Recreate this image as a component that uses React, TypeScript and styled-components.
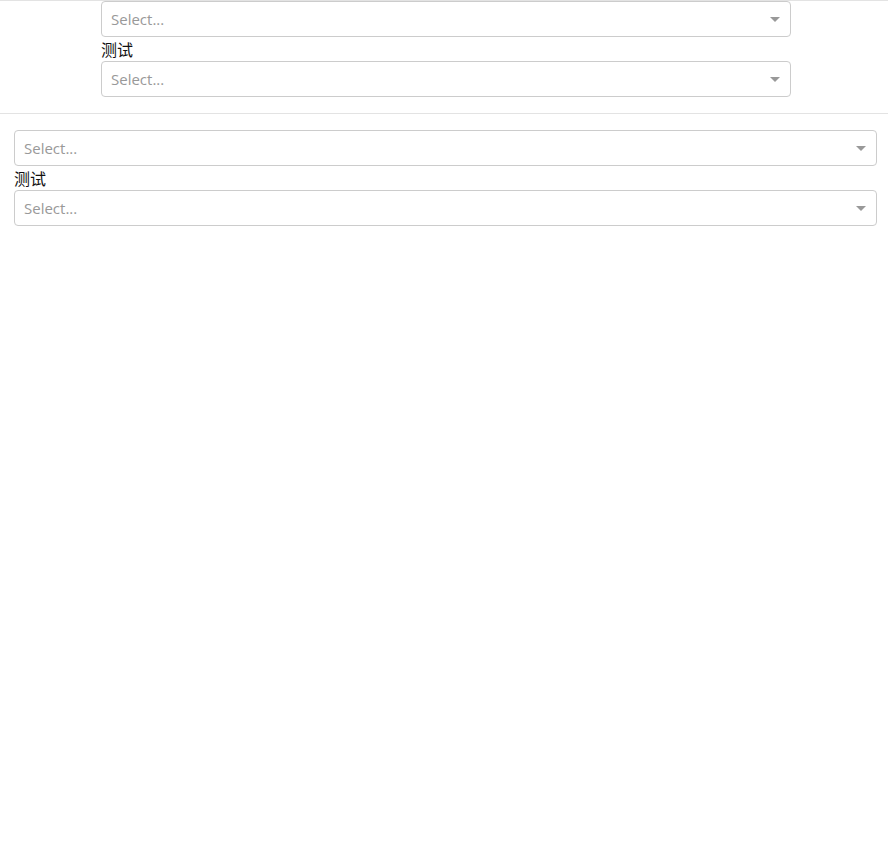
import React from 'react';
import styled, {createGlobalStyle} from "styled-components";

const GlobalStyle = createGlobalStyle`
  html, body {
    margin: 0;
    padding: 0;
    background: #fff;
  }
  body {
    font-family: "Open Sans", "Noto Sans CJK SC", sans-serif;
    font-size: 14px;
    color: #222;
  }
`

const Section = styled.div<{ $left: number; $right: number }>`
  border-top: 1px solid #e3e3e3;
  padding: 0 ${p => p.$right}px 16px ${p => p.$left}px;
  display: flex;
  flex-direction: column;

  &.second {
    padding-top: 16px;
  }
`

const Label = styled.label`
  display: block;
  height: 24px;
  line-height: 24px;
  font-family: "Noto Sans CJK SC", sans-serif;
  font-size: 16px;
  color: #111;
`

const Control = styled.div`
  box-sizing: border-box;
  height: 36px;
  border: 1px solid #cccccc;
  border-radius: 4px;
  background: #fff;
  display: flex;
  align-items: center;
  padding: 0 10px 0 9px;
  cursor: default;
`

const Placeholder = styled.span`
  flex: 1;
  color: #999999;
  font-size: 15px;
  white-space: nowrap;
`

const Caret = styled.span`
  width: 0;
  height: 0;
  border-left: 5px solid transparent;
  border-right: 5px solid transparent;
  border-top: 5px solid #999999;
  margin-top: 1px;
`

const Select = () => (
    <Control>
        <Placeholder>Select...</Placeholder>
        <Caret/>
    </Control>
)

const App = () => {
    return (
        <>
            <GlobalStyle/>
            <Section $left={101} $right={97}>
                <Select/>
                <Label>测试</Label>
                <Select/>
            </Section>
            <Section className={'second'} $left={14} $right={11}>
                <Select/>
                <Label>测试</Label>
                <Select/>
            </Section>
        </>
    );
};

export default App;
